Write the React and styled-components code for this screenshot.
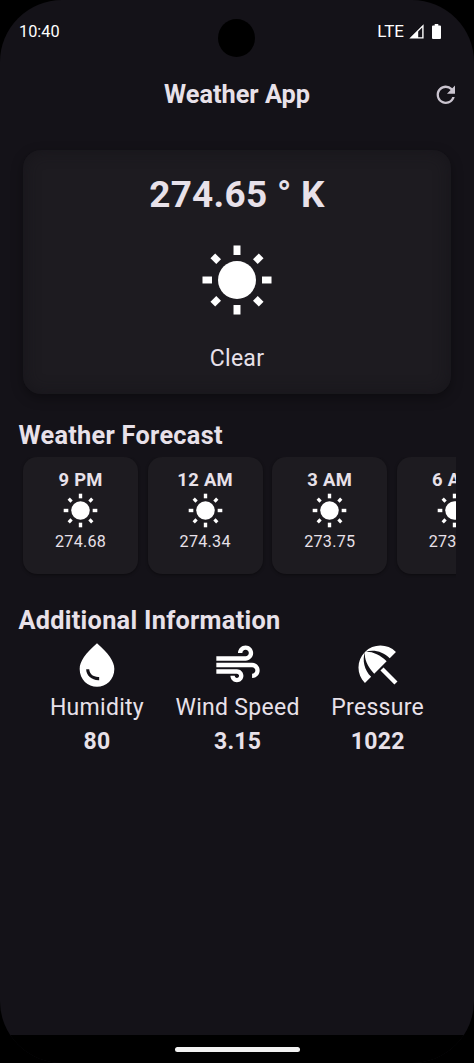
import React from 'react'
import styled, { createGlobalStyle } from 'styled-components'
import { MdAir, MdBeachAccess, MdRefresh } from 'react-icons/md'

const forecast = [
  { time: '9 PM', temp: '274.68' },
  { time: '12 AM', temp: '274.34' },
  { time: '3 AM', temp: '273.75' },
  { time: '6 AM', temp: '273.41' },
]

const WaterDrop = ({ size }) => (
  <svg viewBox="0 0 24 24" width={size} height={size}>
    <path
      fillRule="evenodd"
      d="M12 2C6.67 6.55 4 10.48 4 13.8 4 18.78 7.8 22 12 22s8-3.22 8-8.2C20 10.48 17.33 6.55 12 2Z M7 14H8.4C8.6 16.4 10.5 17.7 13 17.5V19C9.8 19.2 7 17 7 14Z"
    />
  </svg>
)

const details = [
  { icon: WaterDrop, label: 'Humidity', value: '80' },
  { icon: MdAir, label: 'Wind Speed', value: '3.15' },
  { icon: MdBeachAccess, label: 'Pressure', value: '1022' },
]

const Sun = ({ size }) => (
  <SunIcon viewBox="0 0 24 24" width={size} height={size}>
    <circle cx="12" cy="12" r="6" />
    {[0, 90, 180, 270].map(a => (
      <rect key={a} x="10.9" y="1.1" width="2.2" height="3" transform={`rotate(${a} 12 12)`} />
    ))}
    {[45, 135, 225, 315].map(a => (
      <rect key={a} x="10.95" y="1.2" width="2.1" height="2.6" transform={`rotate(${a} 12 12)`} />
    ))}
  </SunIcon>
)

const App = () => (
  <Phone>
    <GlobalStyle />
    <Screen>
      {/* Status bar */}
      <StatusBar>
        <Clock>10:40</Clock>
        <Status>
          LTE
          <svg width="15" height="15" viewBox="0 0 15 15">
            <path d="M0.3 14.6 L14.6 0.3 V14.6 Z M9.2 7.5 V13.3 H13.2 V3.5 Z" fill="#fff" fillRule="evenodd" />
          </svg>
          <Battery width="9" height="15" viewBox="0 0 9 15">
            <path d="M2.7 0 H6.3 V1.4 H8 Q9 1.4 9 2.4 V14 Q9 15 8 15 H1 Q0 15 0 14 V2.4 Q0 1.4 1 1.4 H2.7 Z" fill="#fff" />
          </Battery>
        </Status>
        <Camera />
      </StatusBar>

      {/* App bar */}
      <AppBar>
        <Title>Weather App</Title>
        <Refresh aria-label="Refresh"><MdRefresh size={27.6} /></Refresh>
      </AppBar>

      {/* Content */}
      <Body>
        <CurrentCard>
          <Temperature>274.65 ° K</Temperature>
          <Sun size={76} />
          <Condition>Clear</Condition>
        </CurrentCard>

        <Heading>Weather Forecast</Heading>
        <ForecastRow>
          {forecast.map(item => (
            <ForecastCard key={item.time}>
              <Hour>{item.time}</Hour>
              <Sun size={37} />
              <HourTemp>{item.temp}</HourTemp>
            </ForecastCard>
          ))}
        </ForecastRow>

        <Heading>Additional Information</Heading>
        <InfoRow>
          {details.map(({ icon: Icon, label, value }) => (
            <InfoItem key={label}>
              <Icon size={52} />
              <InfoLabel>{label}</InfoLabel>
              <InfoValue>{value}</InfoValue>
            </InfoItem>
          ))}
        </InfoRow>
      </Body>

      {/* Gesture bar */}
      <NavBar><Handle /></NavBar>
    </Screen>
  </Phone>
)

export default App

const GlobalStyle = createGlobalStyle`
  * {
    box-sizing: border-box;
  }
  body {
    margin: 0;
    background: #000;
    font-family: Roboto, sans-serif;
    color: #e8e1e9;
  }
`

const Phone = styled.div`
  width: 474px;
  height: 1063px;
  background: #000;
`

const Screen = styled.div`
  position: relative;
  display: flex;
  flex-direction: column;
  height: 100%;
  background: #141218;
  border-radius: 62px;
  overflow: hidden;
`

// Status bar
const StatusBar = styled.div`
  position: relative;
  display: flex;
  justify-content: space-between;
  align-items: center;
  height: 62px;
  padding: 0 33px 0 19px;
  color: #fff;
  font-size: 17px;
`

const Clock = styled.span`
  font-size: 16.3px;
`

const Status = styled.div`
  display: flex;
  align-items: center;
  gap: 5px;
`

const Battery = styled.svg`
  margin-left: 3px;
`

// sits over the middle of the status bar
const Camera = styled.div`
  position: absolute;
  top: 19px;
  left: 218px;
  width: 37px;
  height: 38px;
  border-radius: 50%;
  background: #000;
`

// App bar
const AppBar = styled.header`
  display: grid;
  grid-template-columns: 1fr auto 1fr;
  align-items: center;
  height: 64px;
  padding: 0 14px;
`

const Title = styled.h1`
  grid-column: 2;
  margin: 0;
  font-size: 25.3px;
  font-weight: 700;
`

const Refresh = styled.button`
  justify-self: end;
  display: flex;
  padding: 1px 0 0;
  border: 0;
  background: none;
  color: #cac4cf;
`

const Body = styled.main`
  flex: 1;
  padding: 24px 18.4px 0;
`

// Current weather
const CurrentCard = styled.section`
  display: flex;
  flex-direction: column;
  align-items: center;
  height: 243.5px;
  margin: 0 4.6px;
  padding-top: 18px;
  border-radius: 18px;
  background: #1d1b20;
  box-shadow: 0 4px 12px rgba(0, 0, 0, 0.35), inset 0 0 16px rgba(20, 18, 24, 0.7);
`

const Temperature = styled.div`
  margin-bottom: 21px;
  font-size: 36.9px;
  font-weight: 700;
  line-height: 53px;
  letter-spacing: 0.29px;
`

const SunIcon = styled.svg`
  flex: none;
  fill: #fff;
`

const Condition = styled.div`
  margin-top: 24px;
  font-size: 23px;
  line-height: 33px;
  letter-spacing: 0.29px;
`

const Heading = styled.h2`
  margin: 23px 0 3.5px;
  font-size: 25.3px;
  font-weight: 700;
  line-height: 37px;
  letter-spacing: 0.29px;
`

// Forecast
const ForecastRow = styled.div`
  display: flex;
  gap: 9.4px;
  padding: 0 4.6px 5px;
  overflow: hidden;
`

const ForecastCard = styled.div`
  flex: 0 0 115.2px;
  display: flex;
  flex-direction: column;
  align-items: center;
  height: 117px;
  padding-top: 10px;
  border-radius: 14px;
  background: #1d1b20;
  box-shadow: 0 1px 3px rgba(0, 0, 0, 0.4);
`

const Hour = styled.div`
  margin-bottom: -1px;
  font-size: 18.4px;
  font-weight: 700;
  line-height: 26px;
  letter-spacing: 0.29px;
`

const HourTemp = styled.div`
  margin-top: 1px;
  font-size: 16.1px;
  line-height: 23px;
  letter-spacing: 0.29px;
`

// Additional information
const InfoRow = styled.div`
  display: flex;
  justify-content: space-evenly;
  margin-top: -4px;
`

const InfoItem = styled.div`
  display: flex;
  flex-direction: column;
  align-items: center;

  svg {
    fill: #fff;
  }
`

const InfoLabel = styled.div`
  font-size: 23px;
  line-height: 33.5px;
  letter-spacing: 0.29px;
`

const InfoValue = styled.div`
  margin-top: 0.7px;
  font-size: 23px;
  font-weight: 700;
  line-height: 33.5px;
  letter-spacing: 0.29px;
`

// Gesture bar
const NavBar = styled.div`
  display: flex;
  justify-content: center;
  height: 28px;
  padding-top: 12px;
  background: #000;
`

const Handle = styled.div`
  width: 125px;
  height: 5px;
  border-radius: 3px;
  background: #f2f2f2;
`
